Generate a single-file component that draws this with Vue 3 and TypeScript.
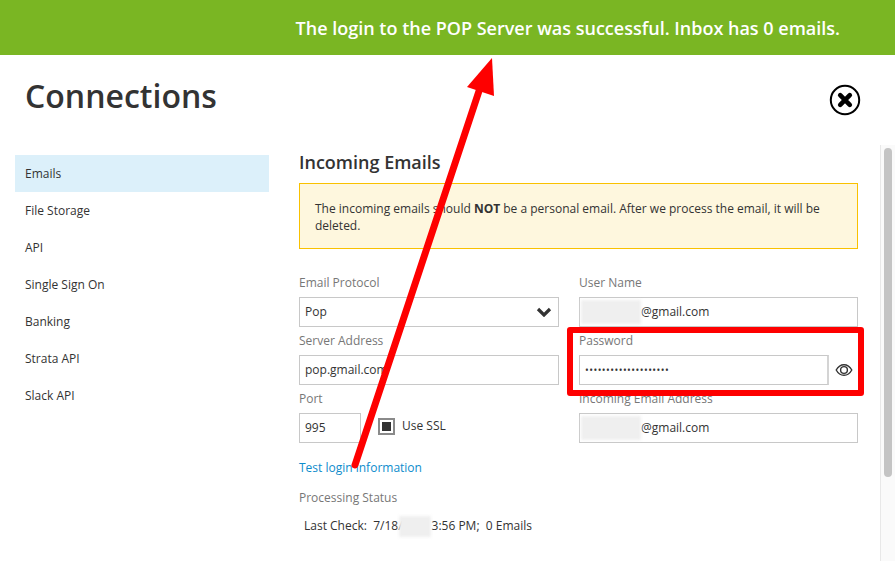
<script setup lang="ts">
const navItems: string[] = ['Emails', 'File Storage', 'API', 'Single Sign On', 'Banking', 'Strata API', 'Slack API']
</script>

<template>
  <div class="page">
    <div class="banner">The login to the POP Server was successful. Inbox has 0 emails.</div>

    <header class="head">
      <h1 class="title">Connections</h1>
      <svg class="close" width="32" height="32" viewBox="0 0 32 32" aria-label="Close">
        <circle cx="16" cy="16" r="14.2" fill="#fff" stroke="#000" stroke-width="2" />
        <path d="M11.2 11.2 L20.8 20.8 M20.8 11.2 L11.2 20.8" stroke="#000" stroke-width="4.6" stroke-linecap="round" />
      </svg>
    </header>

    <div class="body">
      <nav class="nav">
        <div v-for="(item, i) in navItems" :key="item" class="nav-item" :class="{ active: i === 0 }">{{ item }}</div>
      </nav>

      <main class="main">
        <h2 class="heading">Incoming Emails</h2>
        <div class="alert">
          The incoming emails should <b>NOT</b> be a personal email. After we process the email, it will be deleted.
        </div>

        <div class="form">
          <div class="field">
            <label class="label">Email Protocol</label>
            <div class="input select">
              <span>Pop</span>
              <svg width="16" height="10" viewBox="0 0 16 10"><path d="M2 2 L8 8 L14 2" fill="none" stroke="#333" stroke-width="3.2" /></svg>
            </div>
          </div>
          <div class="field">
            <label class="label">User Name</label>
            <div class="input"><span class="blur wide"></span>@gmail.com</div>
          </div>

          <div class="field">
            <label class="label">Server Address</label>
            <div class="input">pop.gmail.com</div>
          </div>
          <div class="field">
            <label class="label">Password</label>
            <div class="pass-row">
              <div class="input pass"><span class="dots">••••••••••••••••••••</span></div>
              <svg class="eye" width="18" height="14" viewBox="0 0 18 14">
                <path d="M1.2 7 C3.2 3.4 5.8 1.7 9 1.7 C12.2 1.7 14.8 3.4 16.8 7 C14.8 10.6 12.2 12.3 9 12.3 C5.8 12.3 3.2 10.6 1.2 7 Z" fill="none" stroke="#333" stroke-width="1.4" />
                <circle cx="9" cy="7" r="3.4" fill="none" stroke="#333" stroke-width="1.4" />
              </svg>
            </div>
          </div>

          <div class="field">
            <label class="label">Port</label>
            <div class="port-row">
              <div class="input port">995</div>
              <span class="check"><span class="check-fill"></span></span>
              <span class="ssl">Use SSL</span>
            </div>
          </div>
          <div class="field">
            <label class="label">Incoming Email Address</label>
            <div class="input"><span class="blur wide"></span>@gmail.com</div>
          </div>
        </div>

        <a class="link">Test login information</a>
        <div class="status-label">Processing Status</div>
        <div class="status">Last Check:&nbsp; 7/18/<span class="blur date"></span>3:56 PM;&nbsp; 0 Emails</div>
      </main>

      <div class="scroll"><div class="thumb"></div></div>
    </div>

    <!-- Annotations drawn over the screenshot -->
    <div class="mark"></div>
    <svg class="arrow" width="895" height="561" viewBox="0 0 895 561">
      <line x1="355" y1="465" x2="480" y2="88" stroke="#fe0000" stroke-width="7" stroke-linecap="round" />
      <polygon points="492,58 467,87 494,96" fill="#fe0000" />
    </svg>
  </div>
</template>

<style scoped>
.page {
  position: relative;
  width: 895px;
  height: 561px;
  overflow: hidden;
  background: #fff;
  color: #333;
  font-family: "Open Sans", "Liberation Sans", sans-serif;
  font-size: 12px;
}
.banner {
  height: 55px;
  box-sizing: border-box;
  padding-right: 55px;
  background: #7ab623;
  color: #fff;
  font-size: 18px;
  font-weight: 600;
  line-height: 57px;
  text-align: right;
}
.head {
  height: 90px;
  box-sizing: border-box;
  padding: 0 34px 0 25px;
  display: flex;
  justify-content: space-between;
}
.title {
  margin: 18px 0 0;
  font-size: 32px;
  line-height: 45px;
  font-weight: 600;
  color: #333;
}
.close {
  margin-top: 29px;
}
.body {
  display: flex;
  height: 416px;
}
.nav {
  width: 254px;
  margin: 10px 30px 0 15px;
  flex: none;
}
.nav-item {
  height: 37px;
  line-height: 37px;
  padding-left: 10px;
}
.nav-item.active {
  background: #dcf0fa;
}
.main {
  width: 559px;
  flex: none;
}
.heading {
  margin: 5px 0 0;
  font-size: 18px;
  line-height: 24px;
  font-weight: 600;
  color: #333;
}
.alert {
  margin-top: 9px;
  height: 66px;
  box-sizing: border-box;
  padding: 16px 15px 0;
  border: 1px solid #f9c100;
  background: #fef7de;
  line-height: 17px;
}
.alert b {
  font-weight: 700;
}
.form {
  margin-top: 20px;
  display: grid;
  grid-template-columns: 260px 279px;
  column-gap: 20px;
  grid-auto-rows: 58px;
}
.label {
  display: block;
  height: 28px;
  line-height: 28px;
  color: #777;
}
.input {
  height: 30px;
  box-sizing: border-box;
  border: 1px solid #c8c8c8;
  padding: 0 5px;
  line-height: 28px;
  display: flex;
  align-items: center;
  color: #333;
  background: #fff;
}
.select {
  justify-content: space-between;
  padding-right: 6px;
}
.pass-row,
.port-row {
  display: flex;
  align-items: center;
}
.pass {
  width: 250px;
  flex: none;
  border-right: 2px solid #d4d4d4;
}
.dots {
  font-size: 10px;
  letter-spacing: 0.45px;
  color: #333;
}
.eye {
  margin-left: 6px;
}
.port {
  width: 62px;
  flex: none;
}
.check {
  width: 17px;
  height: 17px;
  box-sizing: border-box;
  margin: -4px 0 0 17px;
  border: 2px solid #8a8a8a;
  padding: 2px;
  flex: none;
}
.check-fill {
  display: block;
  width: 100%;
  height: 100%;
  background: #333;
}
.ssl {
  margin: -6px 0 0 7px;
}
.blur {
  display: inline-block;
  background: #efefef;
  filter: blur(1.5px);
}
.blur.wide {
  width: 60px;
  height: 24px;
  margin-left: -4px;
  flex: none;
}
.blur.date {
  width: 32px;
  height: 21px;
  vertical-align: middle;
  margin-left: -4px;
  margin-right: 1px;
}
.link {
  display: block;
  margin-top: 15px;
  line-height: 20px;
  color: #0d8ccc;
}
.status-label {
  margin-top: 10px;
  line-height: 20px;
  color: #777;
}
.status {
  margin: 8px 0 0 5px;
  line-height: 20px;
}
.scroll {
  margin: 0 0 0 22px;
  width: 15px;
  flex: none;
  box-sizing: border-box;
  border-left: 1px solid #e8e8e8;
  background: #fafafa;
  padding: 3px 3px 0 3px;
}
.thumb {
  height: 329px;
  border-radius: 4px;
  background: #c4c4c4;
}
.mark {
  position: absolute;
  left: 567px;
  top: 327px;
  width: 297px;
  height: 69px;
  box-sizing: border-box;
  border: 6.5px solid #fe0000;
  border-radius: 3px;
}
.arrow {
  position: absolute;
  left: 0;
  top: 0;
  pointer-events: none;
}
</style>
